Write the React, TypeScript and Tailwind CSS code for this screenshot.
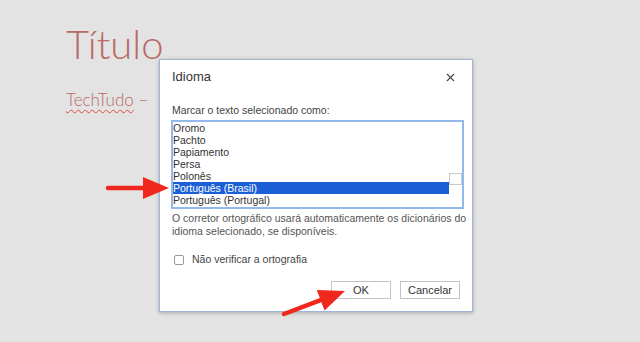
import { X } from 'lucide-react';

const languages = [
    'Oromo',
    'Pachto',
    'Papiamento',
    'Persa',
    'Polonês',
    'Português (Brasil)',
    'Português (Portugal)',
];

function Arrow({ x1, y1, x2, y2 }: { x1: number; y1: number; x2: number; y2: number }) {
    // shaft + triangular head pointing at (x2, y2)
    const dx = x2 - x1;
    const dy = y2 - y1;
    const len = Math.hypot(dx, dy);
    const ux = dx / len;
    const uy = dy / len;
    const headLen = 26;
    const headW = 11;
    const bx = x2 - ux * headLen;
    const by = y2 - uy * headLen;
    const px = -uy;
    const py = ux;
    return (
        <g>
            <line x1={x1} y1={y1} x2={bx + ux * 2} y2={by + uy * 2} stroke="#f0271c" strokeWidth={4.5} strokeLinecap="round" />
            <polygon
                points={`${x2},${y2} ${bx + px * headW},${by + py * headW} ${bx - px * headW},${by - py * headW}`}
                fill="#f0271c"
            />
        </g>
    );
}

export default function App() {
    return (
        <div className="relative h-[342px] w-[640px] overflow-hidden bg-[#e3e3e3]" style={{ fontFamily: '"Liberation Sans", Arial, sans-serif' }}>
            {/* document behind the dialog */}
            <div className="flex flex-col pl-[66px] pt-[20px] text-[#b96a66]" style={{ fontFamily: 'Lato, "DejaVu Sans", sans-serif' }}>
                <div className="text-[40px] font-light leading-[48px]">Título</div>
                <div className="mt-[20px] text-[17px] font-light leading-[24px]">
                    <span className="underline decoration-wavy decoration-[#e04a45] decoration-1 underline-offset-[3px]">TechTudo</span>
                    <span> –</span>
                </div>
            </div>

            {/* Idioma dialog */}
            <div className="absolute left-[159px] top-[59px] flex h-[253px] w-[314px] flex-col border border-[#9fb4d8] bg-white px-[11px] text-[#333] shadow-[0_1px_4px_rgba(0,0,0,0.25)]">
                <div className="flex h-[32px] items-center justify-between pl-[1px] pt-[2px]">
                    <span className="text-[13px] text-[#333]">Idioma</span>
                    <X className="mr-[4px] h-[13px] w-[13px] text-[#444]" strokeWidth={2} />
                </div>

                <div className="mt-[12px] whitespace-nowrap pl-[1px] text-[10.5px] leading-[13px] text-[#444]">Marcar o texto selecionado como:</div>

                <div className="mt-[3px] flex h-[89px] w-[293px] border-2 border-[#93b9ec] bg-white">
                    <div className="flex flex-1 flex-col text-[10.5px] leading-[12px] text-[#333]">
                        {languages.map(lang => (
                            <div
                                key={lang}
                                className={lang === 'Português (Brasil)' ? 'h-[12px] bg-[#1b5fd6] text-white' : 'h-[12px]'}
                            >
                                {lang}
                            </div>
                        ))}
                    </div>
                    <div className="flex w-[13px] flex-col pt-[51px]">
                        <div className="h-[12px] w-[13px] border border-[#c9c9c9] bg-white" />
                    </div>
                </div>

                <div className="mt-[3px] whitespace-nowrap pl-[1px] text-[10.5px] leading-[12.5px] text-[#555]">
                    O corretor ortográfico usará automaticamente os dicionários do
                    <br />
                    idioma selecionado, se disponíveis.
                </div>

                <label className="mt-[15px] flex items-center gap-[8px] pl-[3px]">
                    <span className="h-[10px] w-[10px] rounded-[2px] border border-[#9a9a9a] bg-white" />
                    <span className="text-[10.5px] text-[#444]">Não verificar a ortografia</span>
                </label>

                <div className="mt-[13px] flex justify-end gap-[9px] pr-[1px]">
                    <button className="h-[18px] w-[60px] border border-[#c4c4c4] bg-white text-[11px] text-[#333]">OK</button>
                    <button className="h-[18px] w-[60px] border border-[#c4c4c4] bg-white text-[11px] text-[#333]">Cancelar</button>
                </div>
            </div>

            {/* red annotation arrows */}
            <svg className="absolute left-0 top-0" width={640} height={342}>
                <Arrow x1={108} y1={188} x2={169} y2={188} />
                <Arrow x1={284} y1={314} x2={345} y2={291} />
            </svg>
        </div>
    );
}
